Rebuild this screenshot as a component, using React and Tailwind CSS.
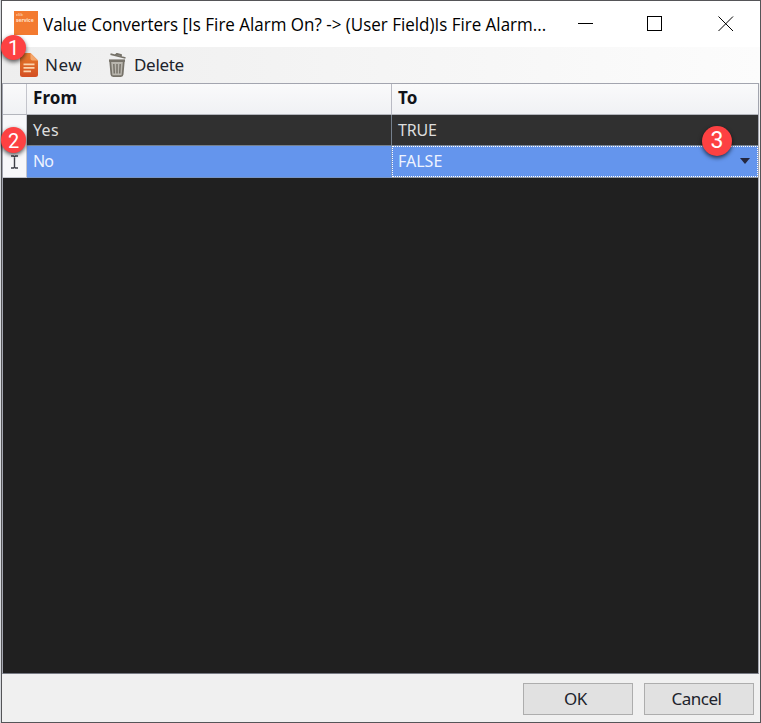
import React from "react";

function Badge({ n, className }) {
  return (
    <div
      className={`absolute flex items-center justify-center rounded-full bg-[#fd4142] font-['Roboto',sans-serif] text-white shadow-[0_2px_4px_rgba(0,0,0,0.65)] ${className}`}
    >
      {n}
    </div>
  );
}

function AppIcon() {
  return (
    <div className="h-[24px] w-[24px] bg-[#f37a30] pl-[2px] pt-[1px] font-['Open_Sans',sans-serif] text-[5px] font-bold text-[#ffe3cf]">
      <div className="h-[5px] text-[4px] leading-[5px] opacity-70">clik</div>
      <div className="h-[6px] leading-[6px]">service</div>
    </div>
  );
}

function NewIcon() {
  return (
    <svg width="19" height="25" viewBox="0 0 19 25">
      <defs>
        <linearGradient id="page" x1="0" y1="0" x2="0" y2="1">
          <stop offset="0" stopColor="#e87d2d" />
          <stop offset="1" stopColor="#d34e22" />
        </linearGradient>
      </defs>
      <path d="M2 0H10.5L18 7.5V21.5Q18 24 15.5 24H2.5Q0 24 0 21.5V2Q0 0 2 0Z" fill="url(#page)" />
      <path d="M10.5 0L18 7.5H12.5Q10.5 7.5 10.5 5.5Z" fill="#f3a66c" />
      <path d="M3.5 11.3H14.5M3.5 14.8H14.5M3.5 18.3H11" stroke="#fbd3ad" strokeWidth="1.8" />
    </svg>
  );
}

function TrashIcon() {
  return (
    <svg width="19" height="25" viewBox="0 0 19 25" fill="none">
      <path d="M2.5 1.2L17.5 5M7.5 2.5L8.8 .8L13 1.9L13 3.6" stroke="#77736a" strokeWidth="1.8" />
      <path d="M1 7.6H17" stroke="#77736a" strokeWidth="2.4" />
      <path d="M2.2 8L3.4 21.5Q3.6 23.2 5.2 23.2H12.8Q14.4 23.2 14.6 21.5L15.8 8Z" fill="#b9b6ae" stroke="#77736a" strokeWidth="1.8" />
      <path d="M5.8 11L6.3 20.5M9 11V20.5M12.2 11L11.7 20.5" stroke="#77736a" strokeWidth="1.5" />
    </svg>
  );
}

function TitleBar() {
  return (
    <div className="flex h-[46px] items-start bg-white">
      <div className="ml-[12px] mt-[10px]">
        <AppIcon />
      </div>
      <div className="ml-[5px] mt-[9px] w-[520px] shrink-0 origin-left scale-x-[0.918] whitespace-nowrap font-['Open_Sans',sans-serif] text-[18.5px] leading-[28px] text-black">
        Value Converters [Is Fire Alarm On? -&gt; (User Field)Is Fire Alarm...
      </div>
      <svg className="ml-auto mr-[26px] mt-[14px] shrink-0" width="156" height="17" fill="none" stroke="#000" strokeWidth="1">
        <path d="M0 8.5H15" />
        <rect x="69.5" y="1.5" width="14" height="14" />
        <path d="M140.5 1.5L155 16M155 1.5L140.5 16" />
      </svg>
    </div>
  );
}

function Toolbar() {
  return (
    <div className="flex h-[36px] items-start bg-linear-to-r from-[#eeeeee] to-[#fcfcfc] font-['Noto_Sans',sans-serif] text-[17px] leading-[24px] text-[#20232c]">
      <div className="ml-[18px] mt-[6px]">
        <NewIcon />
      </div>
      <div className="ml-[6px] mt-[6px] w-[42px] whitespace-nowrap tracking-[0.5px]">New</div>
      <div className="ml-[21px] mt-[6px]">
        <TrashIcon />
      </div>
      <div className="ml-[7px] mt-[6px] whitespace-nowrap tracking-[-0.3px]">Delete</div>
    </div>
  );
}

function IBeam() {
  return (
    <svg width="9" height="14" viewBox="0 0 9 14" fill="none" stroke="#3f4048" strokeWidth="1.4">
      <path d="M1 1H3.5L4.5 2L5.5 1H8M4.5 1.5V12.5M1 13H3.5L4.5 12L5.5 13H8" />
    </svg>
  );
}

function Grid() {
  const cols = "grid grid-cols-[24px_365px_minmax(0,1fr)]";
  return (
    <div className="mr-px h-[591px] border border-[#a3a5af] border-b-[#777a83] bg-[#202020] font-['Noto_Sans',sans-serif]">
      <div className={`${cols} h-[31px] border-b border-[#b3b5bc] bg-linear-to-b from-[#fafafb] to-[#f0f1f4] text-[17px] leading-[28px] font-bold tracking-[0.1px] text-[#111319]`}>
        <div className="border-r border-[#c4c5cc]" />
        <div className="border-r border-[#b9bac3] pl-[6px]">From</div>
        <div className="pl-[6px]">To</div>
      </div>
      <div className={`${cols} h-[31px] text-[16px] leading-[30px] text-[#dddddd]`}>
        <div className="border-r border-[#c4c5cc] bg-[#f7f7f9]" />
        <div className="border-r border-b border-[#75808d] bg-[#303030] pl-[6px] tracking-[0.3px]">Yes</div>
        <div className="border-b border-[#75808d] bg-[#303030] pl-[6px] tracking-[-0.2px]">TRUE</div>
      </div>
      <div className={`${cols} h-[32px] text-[16px] leading-[30px] text-[#eef3ff]`}>
        <div className="flex items-start justify-center border-r border-b border-[#c4c5cc] bg-[#f7f7f9] pt-[9px]">
          <IBeam />
        </div>
        <div className="border-r border-b border-[#7794c3] bg-[#6495ed] pl-[6px] tracking-[-0.8px]">No</div>
        <div className="border-b border-[#8f969f] bg-[#6495ed]">
          <div className="flex h-[31px] items-start border border-dotted border-white pl-[5px] pr-[7px] leading-[28px]">
            <span>FALSE</span>
            <svg className="ml-auto mt-[11px]" width="10" height="6">
              <path d="M0 0H10L5 6Z" fill="#252840" />
            </svg>
          </div>
        </div>
      </div>
    </div>
  );
}

function Button({ children }) {
  return (
    <button className="h-[32px] w-[110px] border border-[#adadad] bg-[#e1e1e1] pr-[5px] font-['Noto_Sans',sans-serif] text-[17px] leading-[28px] tracking-[-0.5px] text-[#20232c]">
      {children}
    </button>
  );
}

export default function App() {
  return (
    <div className="relative h-[723px] w-[761px] overflow-hidden bg-[#d7dade] pl-[1px]">
      <div className="h-[723px] border border-[#555558] bg-[#f0f0f0]">
        <TitleBar />
        <Toolbar />
        <Grid />
        <div className="flex justify-end gap-[11px] pr-[6px] pt-[9px]">
          <Button>OK</Button>
          <Button>Cancel</Button>
        </div>
      </div>
      <Badge n="1" className="left-[1px] top-[35px] h-[25px] w-[25px] pt-[1px] text-[20px]" />
      <Badge n="2" className="left-[1px] top-[127px] h-[26px] w-[25px] pt-[1px] text-[20px]" />
      <Badge n="3" className="left-[702px] top-[126px] h-[30px] w-[30px] text-[23px]" />
    </div>
  );
}
